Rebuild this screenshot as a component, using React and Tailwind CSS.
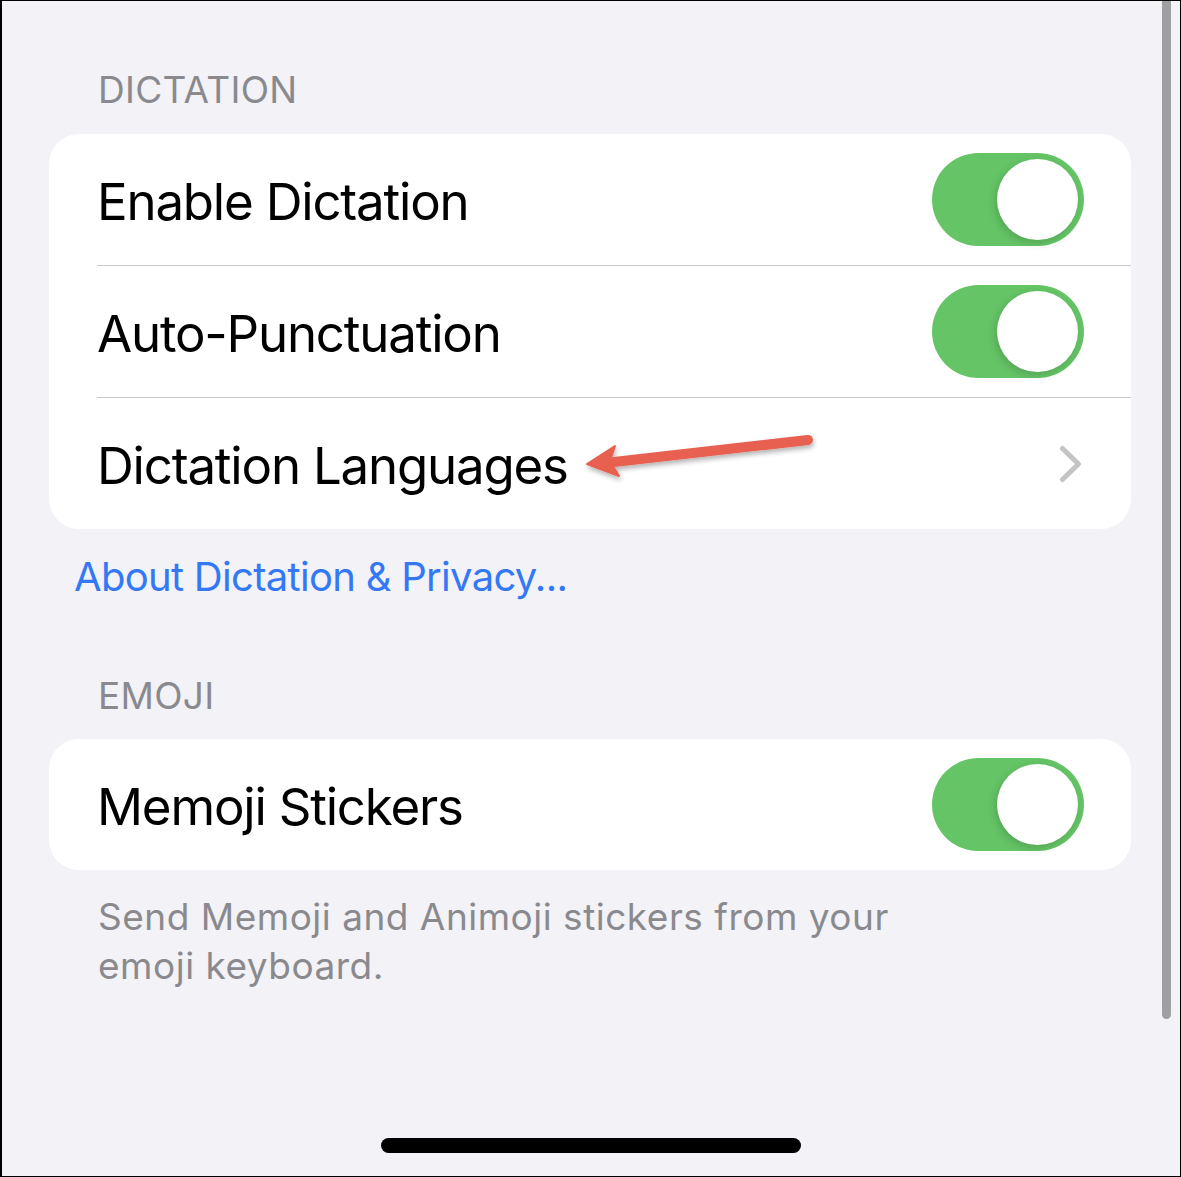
import React from "react";

const font = { fontFamily: "Inter, 'Noto Sans', sans-serif" };

function Toggle() {
  return (
    <div className="relative w-[152px] h-[93px] shrink-0 rounded-full bg-[#65c466]">
      <div className="absolute right-[6px] top-[6px] w-[81px] h-[81px] rounded-full bg-white shadow-[-2px_3px_8px_rgba(0,0,0,0.16)]" />
    </div>
  );
}

function Chevron() {
  return (
    <svg width="24" height="38" viewBox="0 0 24 38" className="shrink-0 mr-[1px]">
      <polyline
        points="3.5,3.5 19.5,19 3.5,34.5"
        fill="none"
        stroke="#c4c4c7"
        strokeWidth="5"
        strokeLinecap="round"
        strokeLinejoin="round"
      />
    </svg>
  );
}

function Row({ label, children }) {
  return (
    <div className="h-[131px] flex items-center justify-between pl-[48px] pr-[47px]">
      <span className="text-[51px] leading-none text-black mt-[4px] tracking-[-1.2px]">{label}</span>
      {children}
    </div>
  );
}

function Divider() {
  return <div className="ml-[48px] h-px bg-[#c8c8cb]" />;
}

function SectionHeader({ children, className = "" }) {
  return (
    <div className={`pl-[49px] text-[37px] leading-none tracking-[0.3px] text-[#8a8a8e] ${className}`}>
      {children}
    </div>
  );
}

export default function App() {
  return (
    <div
      className="relative w-[1181px] h-[1177px] overflow-hidden bg-[#f2f2f7] border-black border-t border-r border-b border-l-2"
      style={font}
    >
      <div className="pl-[47px] pr-[49px]">
        <SectionHeader className="mt-[70px]">DICTATION</SectionHeader>

        <div className="mt-[26px] rounded-[30px] bg-white overflow-hidden">
          <Row label="Enable Dictation">
            <Toggle />
          </Row>
          <Divider />
          <Row label="Auto-Punctuation">
            <Toggle />
          </Row>
          <Divider />
          <Row label="Dictation Languages">
            <Chevron />
          </Row>
        </div>

        <div className="mt-[28px] pl-[25px] text-[40px] leading-none tracking-[-0.7px] text-[#3478f6]">
          About Dictation &amp; Privacy...
        </div>

        <SectionHeader className="mt-[80px]">EMOJI</SectionHeader>

        <div className="mt-[25px] rounded-[30px] bg-white overflow-hidden">
          <Row label="Memoji Stickers">
            <Toggle />
          </Row>
        </div>

        <p className="mt-[22px] pl-[49px] text-[37px] leading-[49px] tracking-[0.5px] text-[#8a8a8e]">
          Send Memoji and Animoji stickers from your
          <br />
          emoji keyboard.
        </p>
      </div>

      {/* callout arrow pointing at the languages row */}
      <svg
        className="absolute left-[568px] top-[424px]"
        width="264"
        height="70"
        viewBox="0 0 264 70"
      >
        <defs>
          <filter id="arrowShadow" x="-10%" y="-30%" width="120%" height="160%">
            <feDropShadow dx="1" dy="3" stdDeviation="2.5" floodColor="#000" floodOpacity="0.3" />
          </filter>
        </defs>
        <g filter="url(#arrowShadow)" fill="#e8604f" stroke="#e8604f">
          <line x1="44" y1="37" x2="238" y2="15" strokeWidth="10" strokeLinecap="round" />
          <polygon points="17,39 45,21 40,36 49,51" strokeWidth="2" strokeLinejoin="round" />
        </g>
      </svg>

      {/* scroll indicator */}
      <div className="absolute left-[1160px] top-0 w-[9px] h-[1018px] rounded-b-full bg-[#a0a0a3]" />

      {/* home indicator */}
      <div className="absolute left-[379px] bottom-[23px] w-[420px] h-[15px] rounded-full bg-black" />
    </div>
  );
}
